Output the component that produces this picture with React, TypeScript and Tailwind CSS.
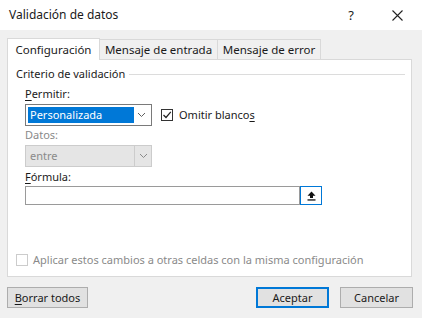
import React from "react";

function Chevron({ color = "#606060" }: { color?: string }) {
  return (
    <svg width="9" height="6" viewBox="0 0 9 6">
      <path d="M1 1 L4.5 4.5 L8 1" fill="none" stroke={color} strokeWidth="1" />
    </svg>
  );
}

function Check() {
  return (
    <svg width="10" height="10" viewBox="0 0 10 10">
      <path d="M1.5 5 L4 7.5 L8.8 1.8" fill="none" stroke="#222" strokeWidth="1.2" />
    </svg>
  );
}

export default function App() {
  return (
    <div className="w-[422px] h-[318px] bg-[#f0f0f0] font-['Noto_Sans',sans-serif] text-[11px] leading-[16px] text-[#1a1a1a] flex flex-col overflow-hidden">
      {/* title bar */}
      <div className="h-[30px] bg-white flex items-center pl-[9px] shrink-0">
        <span className="text-[12px]">Validación de datos</span>
        <span className="ml-auto text-[13px] mr-[38px]">?</span>
        <svg width="11" height="11" viewBox="0 0 11 11" className="mr-[19px]">
          <path d="M0.5 0.5 L10.5 10.5 M10.5 0.5 L0.5 10.5" stroke="#222" strokeWidth="1.1" />
        </svg>
      </div>

      <div className="px-[7px] pt-[8px]">
        {/* tabs */}
        <div className="flex items-end h-[21px]">
          <div className="h-[22px] w-[93px] bg-white border border-b-0 border-[#d9d9d9] flex items-center justify-center relative top-[1px] z-10 text-[11.5px]">
            Configuración
          </div>
          <div className="h-[20px] w-[118px] bg-[#f0f0f0] border border-l-0 border-b-0 border-[#d9d9d9] flex items-center justify-center text-[11.5px]">
            Mensaje de entrada
          </div>
          <div className="h-[20px] w-[103px] bg-[#f0f0f0] border border-l-0 border-b-0 border-[#d9d9d9] flex items-center justify-center text-[11.5px]">
            Mensaje de error
          </div>
        </div>

        {/* panel */}
        <div className="w-[405px] h-[218px] bg-white border border-[#d9d9d9] pt-[6px] flex flex-col">
          <div className="flex items-center pl-[8px] pr-[6px]">
            <span>Criterio de validación</span>
            <div className="flex-1 h-px bg-[#dcdcdc] ml-[4px]" />
          </div>

          <div className="pl-[17px] flex flex-col">
            <div className="mt-[4px]">
              <span className="underline underline-offset-2">P</span>ermitir:
            </div>
            <div className="flex items-center mt-[2px]">
              <div className="w-[127px] h-[22px] border border-[#7a7a7a] bg-white flex items-center p-[2px]">
                <div className="w-[106px] h-[16px] bg-[#0078d7] text-white pl-[2px] flex items-center">
                  Personalizada
                </div>
                <div className="flex-1 h-full flex items-center justify-center">
                  <Chevron />
                </div>
              </div>
              <div className="ml-[9px] w-[12px] h-[12px] border border-[#333] flex items-center justify-center">
                <Check />
              </div>
              <span className="ml-[6px]">
                Omitir blanco<span className="underline underline-offset-2">s</span>
              </span>
            </div>

            <div className="mt-[1px] text-[#8a8a8a]">Datos:</div>
            <div className="mt-[2px] w-[127px] h-[22px] border border-[#cccccc] bg-[#e5e5e5] flex items-center">
              <span className="pl-[4px] text-[#8a8a8a] w-[108px]">entre</span>
              <div className="flex-1 h-full flex items-center justify-center border-l border-[#cccccc]">
                <Chevron color="#8a8a8a" />
              </div>
            </div>

            <div className="mt-[2px]">
              <span className="underline underline-offset-2">F</span>órmula:
            </div>
            <div className="mt-[1px] flex items-center">
              <div className="w-[275px] h-[19px] border border-[#9a9a9a] bg-white" />
              <div className="w-[22px] h-[19px] border border-[#0078d7] bg-white flex items-center justify-center">
                <svg width="9" height="10" viewBox="0 0 9 10">
                  <path d="M4.5 0.5 L8.5 4.8 L6 4.8 L6 7 L3 7 L3 4.8 L0.5 4.8 Z" fill="#111" />
                  <rect x="0.5" y="8.3" width="8" height="1.3" fill="#111" />
                </svg>
              </div>
            </div>
          </div>

          <div className="mt-auto mb-[8px] pl-[8px] flex items-center text-[#8a8a8a]">
            <div className="w-[12px] h-[12px] border border-[#cccccc]" />
            <span className="ml-[5px]">Aplicar estos cambios a otras celdas con la misma configuración</span>
          </div>
        </div>

        {/* buttons */}
        <div className="flex items-center mt-[10px]">
          <button className="w-[81px] h-[21px] border border-[#adadad] bg-[#e1e1e1] leading-[16px]">
            <span className="underline underline-offset-2">B</span>orrar todos
          </button>
          <button className="ml-auto w-[73px] h-[21px] border-2 border-[#0078d7] bg-[#e1e1e1] leading-[16px]">
            Aceptar
          </button>
          <button className="ml-[11px] w-[73px] h-[21px] border border-[#adadad] bg-[#e1e1e1] leading-[16px] mr-[2px]">
            Cancelar
          </button>
        </div>
      </div>
    </div>
  );
}
